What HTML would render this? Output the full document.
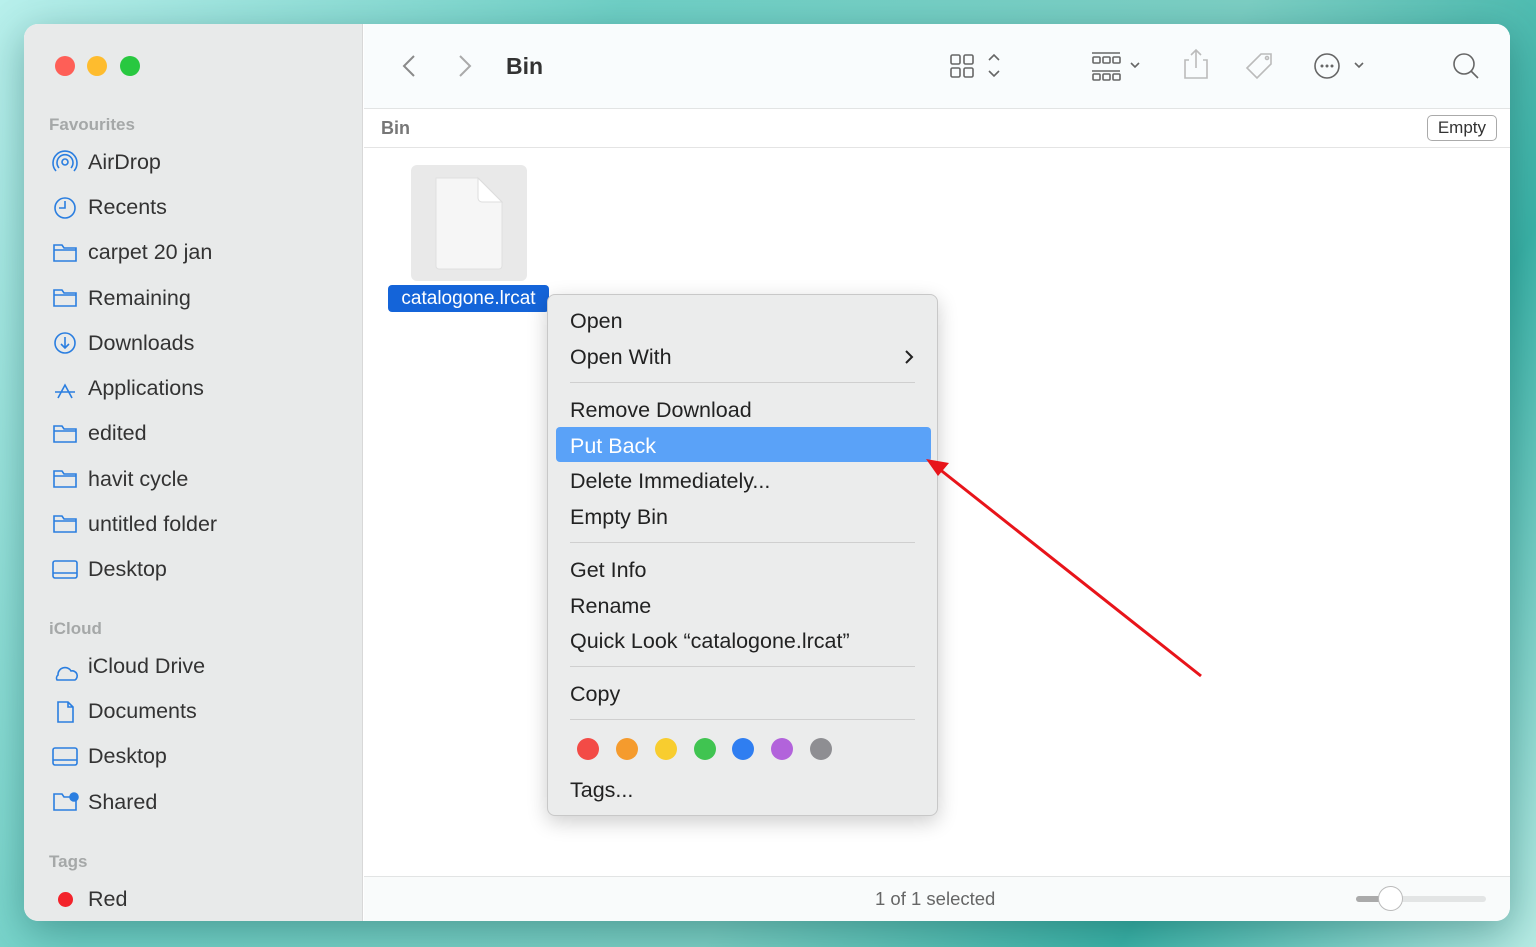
<!DOCTYPE html><html><head><style>
*{margin:0;padding:0;box-sizing:border-box}
body{width:1536px;height:947px;overflow:hidden;font-family:"Liberation Sans",sans-serif;background:linear-gradient(120deg,#b8f0ec 0%,#6fd0c6 30%,#7ccfc4 60%,#3bb3a8 80%,#b6ebe4 100%);position:relative}
.win{position:absolute;left:24px;top:24px;width:1486px;height:897px;border-radius:14px;overflow:hidden;background:#fff;box-shadow:0 10px 40px rgba(0,60,60,.35)}
.side{position:absolute;left:0;top:0;width:339px;height:897px;background:#e8eaea;border-right:1px solid #d8d8d8}
.dot{position:absolute;top:32px;width:20px;height:20px;border-radius:50%}
.sh{position:absolute;left:25px;font-size:17px;color:#a5a8a8;font-weight:bold}
.it{position:absolute;left:64px;font-size:21.5px;color:#333}
.tb{position:absolute;left:340px;top:0;right:0;height:85px;background:#f9fcfd;border-bottom:1px solid #e2e4e4}
.pb{position:absolute;left:340px;top:85px;right:0;height:39px;background:#fff;border-bottom:1px solid #e4e4e4}
.foot{position:absolute;left:340px;bottom:0;right:0;height:45px;background:#f9fbfb;border-top:1px solid #e2e4e4}
.menu{position:absolute;left:547px;top:294px;width:391px;height:522px;background:#ebecec;border:1px solid #c8c8c8;border-radius:8px;box-shadow:0 6px 20px rgba(0,0,0,.2)}
.mi{position:absolute;left:22px;font-size:21.5px;color:#222}
.sep{position:absolute;left:22px;right:22px;height:1px;background:#cfcfcf}
.tag{position:absolute;top:443px;width:22px;height:22px;border-radius:50%}
</style></head><body>
<div class="win">
<div class="side">
<div class="dot" style="left:31px;background:#fe5f57"></div>
<div class="dot" style="left:63px;background:#febc2e"></div>
<div class="dot" style="left:96px;background:#28c840"></div>
<div class="sh" style="top:91px">Favourites</div>
<div class="it" style="top:126px">AirDrop</div>
<div class="it" style="top:171px">Recents</div>
<div class="it" style="top:216px">carpet 20 jan</div>
<div class="it" style="top:262px">Remaining</div>
<div class="it" style="top:307px">Downloads</div>
<div class="it" style="top:352px">Applications</div>
<div class="it" style="top:397px">edited</div>
<div class="it" style="top:443px">havit cycle</div>
<div class="it" style="top:488px">untitled folder</div>
<div class="it" style="top:533px">Desktop</div>
<div class="sh" style="top:595px">iCloud</div>
<div class="it" style="top:630px">iCloud Drive</div>
<div class="it" style="top:675px">Documents</div>
<div class="it" style="top:720px">Desktop</div>
<div class="it" style="top:766px">Shared</div>
<div class="sh" style="top:828px">Tags</div>
<div style="position:absolute;left:34px;top:868px;width:15px;height:15px;border-radius:50%;background:#f3232b"></div>
<div class="it" style="top:863px">Red</div>
<svg style="position:absolute;left:0;top:0" width="339" height="800" fill="none" stroke="#2a7ee0" stroke-width="1.6"><g>
<circle cx="41" cy="138" r="3"/><path d="M35 144a8 8 0 1 1 12 0M32 147a12 12 0 1 1 18 0"/>
<circle cx="41" cy="184" r="10"/><path d="M41 177v7h-6"/>
<path d="M30 221h8l2 3h12v13H30z M30 226h22"/>
<path d="M30 266h8l2 3h12v13H30z M30 271h22"/>
<circle cx="41" cy="319" r="10"/><path d="M41 313v11m-4-4l4 4 4-4"/>
<path d="M34 374l7-13 7 13M31 368h20"/>
<path d="M30 402h8l2 3h12v13H30z M30 407h22"/>
<path d="M30 447h8l2 3h12v13H30z M30 452h22"/>
<path d="M30 492h8l2 3h12v13H30z M30 497h22"/>
<rect x="29" y="537" width="24" height="17" rx="2"/><path d="M29 549h24"/>
<path d="M34 651a7 7 0 0 1 13-4a5 5 0 0 1 4 9H33a4 4 0 0 1 1-5z"/>
<path d="M34 678h10l5 5v15H34z M44 678v5h5"/>
<rect x="29" y="724" width="24" height="17" rx="2"/><path d="M29 736h24"/>
<path d="M30 770h8l2 3h12v13H30z"/><circle cx="50" cy="773" r="4" fill="#2a7ee0"/></g>
</svg>
</div>
<div class="tb">
<svg width="1146" height="85" fill="none" stroke="#8a8a8a" stroke-width="2">
<path d="M50 32l-10 10 10 10"/><path d="M96 32l10 10-10 10" stroke="#aaa"/>
<g stroke="#666" stroke-width="1.6"><rect x="587" y="31" width="9" height="9" rx="1.5"/><rect x="600" y="31" width="9" height="9" rx="1.5"/><rect x="587" y="44" width="9" height="9" rx="1.5"/><rect x="600" y="44" width="9" height="9" rx="1.5"/><path d="M625 36l5-5 5 5M625 47l5 5 5-5"/>
<path d="M728 29h28M728 47h28"/><rect x="729" y="33" width="7" height="6" rx="1"/><rect x="739" y="33" width="7" height="6" rx="1"/><rect x="749" y="33" width="7" height="6" rx="1"/><rect x="729" y="50" width="7" height="6" rx="1"/><rect x="739" y="50" width="7" height="6" rx="1"/><rect x="749" y="50" width="7" height="6" rx="1"/><path d="M767 39l4 4 4-4"/>
<circle cx="963" cy="42" r="12"/><path d="M991 39l4 4 4-4"/><circle cx="1100" cy="40" r="10"/><path d="M1107 47l7 7"/></g>
<g stroke="#bbb" stroke-width="1.6"><path d="M825 36h-4v18h22V36h-4M832 44V26m-5 5l5-5 5 5"/><path d="M883 44l14-14h10v10l-14 14z"/><circle cx="903" cy="34" r="1.5"/></g>
<g fill="#666" stroke="none"><circle cx="958" cy="42" r="1.5"/><circle cx="963" cy="42" r="1.5"/><circle cx="968" cy="42" r="1.5"/></g>
<text x="142" y="50" font-size="23" font-weight="bold" fill="#333" stroke="none" font-family="Liberation Sans">Bin</text>
</svg></div>
<div class="pb"><span style="position:absolute;left:17px;top:9px;font-size:18px;font-weight:bold;color:#777">Bin</span>
<span style="position:absolute;right:13px;top:6px;border:1px solid #aaa;border-radius:5px;padding:2px 10px;font-size:17px;color:#333;background:#fff">Empty</span></div>
<div style="position:absolute;left:387px;top:141px;width:116px;height:116px;background:#e9e9e9;border-radius:6px"></div>
<svg style="position:absolute;left:410px;top:152px" width="72" height="96"><path d="M2 2h42l24 24v64a3 3 0 0 1-3 3H5a3 3 0 0 1-3-3z" fill="#f6f6f6" stroke="#e0e0e0"/><path d="M44 2v20a4 4 0 0 0 4 4h20z" fill="#fff" stroke="#ddd"/></svg>
<div style="position:absolute;left:364px;top:261px;width:161px;height:27px;background:#1464d9;border-radius:4px;color:#fff;font-size:19px;text-align:center;line-height:27px">catalogone.lrcat</div>
<div class="foot"><span style="position:absolute;left:511px;top:11px;font-size:18.5px;color:#666">1 of 1 selected</span>
<div style="position:absolute;left:992px;top:19px;width:130px;height:6px;border-radius:3px;background:#e3e5e5"></div>
<div style="position:absolute;left:992px;top:19px;width:30px;height:6px;border-radius:3px;background:#aaa"></div>
<div style="position:absolute;left:1014px;top:9px;width:25px;height:25px;border-radius:50%;background:#fff;border:1px solid #bbb"></div></div>
</div>
<div class="menu">
<div class="mi" style="top:14px">Open</div>
<div class="mi" style="top:50px">Open With</div>
<svg style="position:absolute;left:355px;top:54px" width="12" height="16" fill="none" stroke="#222" stroke-width="2"><path d="M3 2l6 6-6 6"/></svg>
<div class="sep" style="top:87px"></div>
<div class="mi" style="top:103px">Remove Download</div>
<div style="position:absolute;left:8px;top:132px;width:375px;height:35px;background:#5aa2f8;border-radius:4px"></div>
<div class="mi" style="top:139px;color:#fff">Put Back</div>
<div class="mi" style="top:174px">Delete Immediately...</div>
<div class="mi" style="top:210px">Empty Bin</div>
<div class="sep" style="top:247px"></div>
<div class="mi" style="top:263px">Get Info</div>
<div class="mi" style="top:299px">Rename</div>
<div class="mi" style="top:334px">Quick Look “catalogone.lrcat”</div>
<div class="sep" style="top:371px"></div>
<div class="mi" style="top:387px">Copy</div>
<div class="sep" style="top:424px"></div>
<div class="tag" style="left:29px;background:#f34b46"></div>
<div class="tag" style="left:68px;background:#f59b2d"></div>
<div class="tag" style="left:107px;background:#f8cd2f"></div>
<div class="tag" style="left:146px;background:#40c451"></div>
<div class="tag" style="left:184px;background:#2f7ef1"></div>
<div class="tag" style="left:223px;background:#b263db"></div>
<div class="tag" style="left:262px;background:#8e8e92"></div>
<div class="mi" style="top:483px">Tags...</div>
</div>
<svg style="position:absolute;left:0;top:0" width="1536" height="947"><path d="M1201 676L938 468" stroke="#e8141a" stroke-width="3"/><path d="M926 459l23 4-11 13z" fill="#e8141a"/></svg>
</body></html>
